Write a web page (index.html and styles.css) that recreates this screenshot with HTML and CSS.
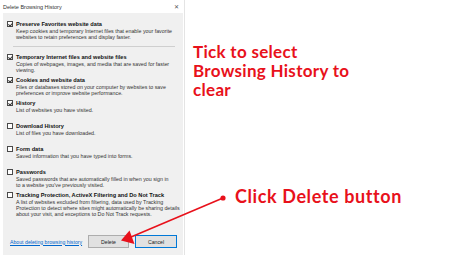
FILE: index.html
```html
<!DOCTYPE html>
<html>
<head>
<meta charset="utf-8">
<link rel="stylesheet" href="styles.css">
</head>
<body>
<div class="page">
  <div class="dialog">
    <div class="titlebar"><span class="title">Delete Browsing History</span><span class="close">✕</span></div>
    <div class="body">
      <div class="item">
        <div class="head"><span class="cb checked"></span><span class="name">Preserve Favorites website data</span></div>
        <p class="desc">Keep cookies and temporary Internet files that enable your favorite<br>websites to retain preferences and display faster.</p>
      </div>
      <div class="sep"></div>
      <div class="item">
        <div class="head"><span class="cb checked"></span><span class="name">Temporary Internet files and website files</span></div>
        <p class="desc">Copies of webpages, images, and media that are saved for faster<br>viewing.</p>
      </div>
      <div class="item">
        <div class="head"><span class="cb checked"></span><span class="name">Cookies and website data</span></div>
        <p class="desc">Files or databases stored on your computer by websites to save<br>preferences or improve website performance.</p>
      </div>
      <div class="item">
        <div class="head"><span class="cb checked"></span><span class="name">History</span></div>
        <p class="desc">List of websites you have visited.</p>
      </div>
      <div class="item">
        <div class="head"><span class="cb"></span><span class="name">Download History</span></div>
        <p class="desc">List of files you have downloaded.</p>
      </div>
      <div class="item">
        <div class="head"><span class="cb"></span><span class="name">Form data</span></div>
        <p class="desc">Saved information that you have typed into forms.</p>
      </div>
      <div class="item">
        <div class="head"><span class="cb"></span><span class="name">Passwords</span></div>
        <p class="desc">Saved passwords that are automatically filled in when you sign in<br>to a website you've previously visited.</p>
      </div>
      <div class="item">
        <div class="head"><span class="cb"></span><span class="name">Tracking Protection, ActiveX Filtering and Do Not Track</span></div>
        <p class="desc">A list of websites excluded from filtering, data used by Tracking<br>Protection to detect where sites might automatically be sharing details<br>about your visit, and exceptions to Do Not Track requests.</p>
      </div>
      <div class="footer">
        <a class="link" href="#">About deleting browsing history</a>
        <div class="buttons">
          <button class="btn">Delete</button>
          <button class="btn focus">Cancel</button>
        </div>
      </div>
    </div>
  </div>
  <div class="annot">
    <p class="tip">Tick to select<br>Browsing History to<br>clear</p>
    <p class="tip click">Click Delete button</p>
  </div>
  <svg class="arrow" width="474" height="255" viewBox="0 0 474 255">
    <line x1="223" y1="198" x2="131" y2="237" stroke="#e8111b" stroke-width="1.6"/>
    <circle cx="223" cy="198" r="2.6" fill="#e8111b"/>
    <polygon points="121,240.5 129.5,230.5 134.5,244" fill="#e8111b"/>
  </svg>
</div>
</body>
</html>
```

FILE: styles.css
```css
* { box-sizing: border-box; }
html, body { margin: 0; padding: 0; background: #fff; }
.page {
  position: relative;
  width: 474px;
  height: 255px;
  display: flex;
  overflow: hidden;
}
.dialog {
  width: 185px;
  height: 255px;
  display: flex;
  flex-direction: column;
  background: #fff;
  border-right: 1px solid #e4e4e4;
  font-family: "Liberation Sans", Arial, sans-serif;
  color: #1a1a1a;
}
.titlebar {
  height: 13px;
  display: flex;
  align-items: center;
  justify-content: space-between;
  padding: 0 5px 0 3px;
}
.title { font-size: 5.5px; color: #333; }
.close { font-size: 6px; color: #555; }
.body {
  flex: 1;
  margin: 0 1px 0 3px;
  background: #f0f0f0;
  padding: 7px 0 7px 4px;
  display: flex;
  flex-direction: column;
}
.item { height: 23px; }
.head { display: flex; align-items: center; height: 7px; }
.cb {
  width: 6px;
  height: 6px;
  border: 0.7px solid #4a4a4a;
  background: #fff;
  margin-right: 3px;
  position: relative;
  flex: none;
}
.cb.checked::after {
  content: "";
  position: absolute;
  left: 1.4px;
  top: 0.3px;
  width: 1.5px;
  height: 3px;
  border-right: 0.6px solid #333;
  border-bottom: 0.6px solid #333;
  transform: rotate(40deg);
}
.name { font-size: 5.65px; font-weight: bold; white-space: nowrap; color: #111; }
.desc {
  margin: 0.5px 0 0 9px;
  font-size: 5.3px;
  line-height: 6.3px;
  white-space: nowrap;
  color: #333;
}
.sep {
  height: 1px;
  background: #cfcfcf;
  margin: 3px 8px 6px 6px;
}
.footer {
  margin-top: auto;
  display: flex;
  align-items: center;
  justify-content: space-between;
  padding: 0 6px 0 3px;
}
.link { font-size: 5.2px; color: #0066cc; text-decoration: underline; }
.buttons { display: flex; gap: 6px; }
.btn {
  height: 13px;
  width: 41px;
  padding: 0;
  font-family: "Liberation Sans", Arial, sans-serif;
  font-size: 5.2px;
  color: #222;
  background: #e1e1e1;
  border: 1px solid #adadad;
}
.btn.focus { width: 42px; border: 1.5px solid #0078d7; }
.annot {
  padding: 42px 0 0 8px;
  display: flex;
  flex-direction: column;
}
.tip {
  margin: 0;
  font-family: Lato, "Noto Sans", sans-serif;
  font-weight: bold;
  font-size: 17px;
  line-height: 19px;
  letter-spacing: 0.3px;
  color: #e8111b;
  white-space: nowrap;
}
.tip.click { margin: 88px 0 0 42px; font-size: 18px; letter-spacing: 0.6px; }
.arrow { position: absolute; left: 0; top: 0; pointer-events: none; }
```
